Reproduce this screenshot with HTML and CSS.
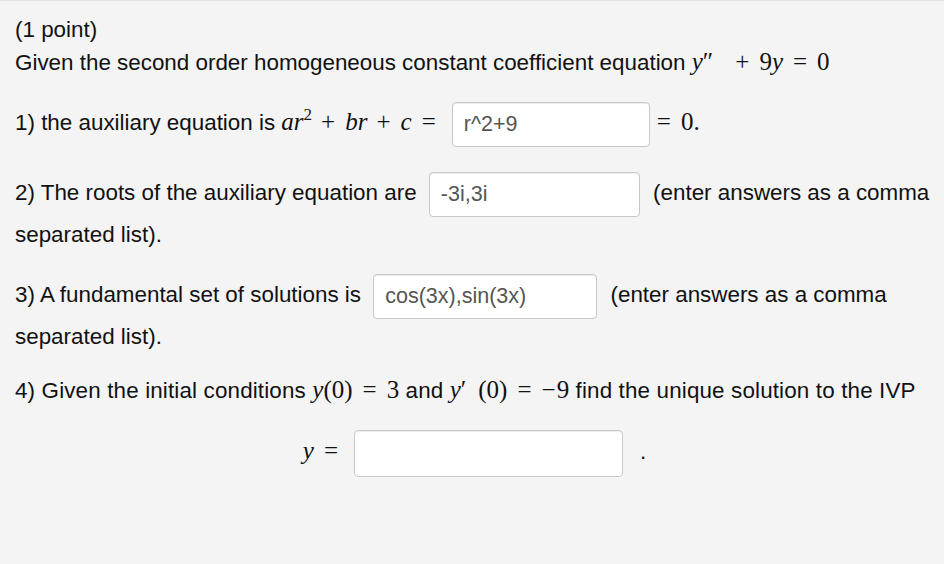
FILE: index.html
```html
<!DOCTYPE html>
<html>
<head>
<meta charset="utf-8">
<link rel="stylesheet" href="styles.css">
</head>
<body>
<div class="problem">
  <p class="head">(1 point)<br>Given the second order homogeneous constant coefficient equation <span class="m"><i>y</i><span class="pr">″</span><span class="op">+</span>9<i>y</i><span class="rel">=</span>0</span></p>

  <p class="row">1) the auxiliary equation is <span class="m"><i>a</i><i>r</i><sup>2</sup><span class="op">+</span><i>b</i><i>r</i><span class="op">+</span><i>c</i><span class="rel">=</span></span><input class="ans w1" type="text" value="r^2+9"><span class="m"><span class="rel first">=</span>0.</span></p>

  <p class="row">2) The roots of the auxiliary equation are <input class="ans w2" type="text" value="-3i,3i"> (enter answers as a comma separated list).</p>

  <p class="row">3) A fundamental set of solutions is <input class="ans w3" type="text" value="cos(3x),sin(3x)"> (enter answers as a comma separated list).</p>

  <p class="row wide">4) Given the initial conditions <span class="m"><i>y</i>(0)<span class="rel">=</span>3</span> and <span class="m"><i>y</i><span class="pr1">′</span>(0)<span class="rel">=</span><span class="neg">−</span>9</span> find the unique solution to the IVP</p>

  <p class="row center"><span class="m"><i>y</i><span class="rel">=</span></span><input class="ans w4" type="text" value=""><span class="dot">.</span></p>
</div>
</body>
</html>
```

FILE: styles.css
```css
html, body {
  margin: 0;
  padding: 0;
}
body {
  background: #f4f4f4;
  border-top: 1px solid #e4e4e4;
  font-family: "Liberation Sans", Arial, sans-serif;
  font-size: 22.4px;
  color: #111;
}
.problem {
  padding: 13px 10px 0 15px;
}
p {
  margin: 0;
  line-height: 32px;
}
.row {
  margin-top: 21px;
}
.wide {
  letter-spacing: 0.15px;
}
.center {
  text-align: center;
}
.m {
  font-family: "Liberation Serif", "Times New Roman", serif;
  font-size: 25px;
  letter-spacing: 0;
  white-space: nowrap;
}
.m i {
  font-style: italic;
}
.m sup {
  font-size: 17px;
  line-height: 0;
  vertical-align: 10px;
}
.pr {
  padding-right: 13px;
}
.pr1 {
  padding-right: 12px;
}
.op {
  padding: 0 10px 0 9px;
}
.rel {
  padding: 0 10px;
}
.rel.first {
  padding-left: 0;
}
.neg {
  padding-right: 1px;
}
.ans {
  box-sizing: border-box;
  height: 45px;
  margin: 2px 7px 2px 6px;
  padding: 0 11px;
  border: 1px solid #c8c8c8;
  border-radius: 4px;
  background: #fff;
  box-shadow: inset 0 1px 1px rgba(0, 0, 0, 0.075);
  font-family: "Liberation Sans", Arial, sans-serif;
  font-size: 21.5px;
  color: #555;
  vertical-align: middle;
}
.w1 { width: 198px; }
.w2 { width: 211px; }
.w3 { width: 224px; }
.w4 { width: 269px; height: 47px; }
.dot {
  padding-left: 10px;
}
```
